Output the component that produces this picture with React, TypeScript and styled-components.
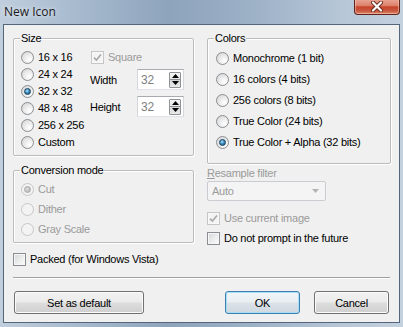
import React from "react";
import styled, { createGlobalStyle } from "styled-components";

const GlobalStyle = createGlobalStyle`
  html, body {
    margin: 0;
    padding: 0;
    background: #ffffff;
  }
  body {
    font-family: "Liberation Sans", Arial, sans-serif;
    font-size: 11px;
  }
`;

const Window = styled.div`
  width: 403px;
  height: 327px;
  box-sizing: border-box;
  display: flex;
  flex-direction: column;
  padding: 0 3px 4px 3px;
  overflow: hidden;
  background: linear-gradient(
    90deg,
    #c0cedd 0%,
    #a8bbcf 18%,
    #8ea4bc 42%,
    #9cb0c6 62%,
    #b7c7d8 85%,
    #c3d0de 100%
  );
`;

const TitleBar = styled.div`
  flex: none;
  height: 24px;
  display: flex;
  justify-content: space-between;
  align-items: flex-start;
`;

const Title = styled.div`
  padding: 4px 0 0 1px;
  font-family: "Open Sans", "Noto Sans", sans-serif;
  font-size: 12px;
  line-height: 16px;
  color: #1a1a1a;
  text-shadow: 0 0 5px rgba(255, 255, 255, 0.9);
`;

const CloseButton = styled.div`
  width: 46px;
  height: 16px;
  margin-top: -1px;
  box-sizing: border-box;
  display: flex;
  align-items: center;
  justify-content: center;
  border: 1px solid #5e2419;
  border-top: none;
  border-radius: 0 0 4px 4px;
  background: linear-gradient(
    180deg,
    #e9a898 0%,
    #dc7f69 45%,
    #c7432c 52%,
    #c95a40 80%,
    #dd8a70 100%
  );
  box-shadow: inset 0 0 0 1px rgba(255, 220, 210, 0.45);
`;

const Client = styled.div`
  flex: 1;
  display: flex;
  flex-direction: column;
  padding: 13px 9px 0 9px;
  background: #f0f0f0;
  border: 1px solid #55657a;
  color: #000000;
  letter-spacing: -0.25px;
`;

const Columns = styled.div`
  display: grid;
  grid-template-columns: 181px 184px;
  column-gap: 13px;
  height: 230px;
`;

const Column = styled.div`
  display: flex;
  flex-direction: column;
  align-items: flex-start;
`;

const Group = styled.div<{ $h: number; $padTop: number; $padLeft: number; $gap?: number }>`
  position: relative;
  align-self: stretch;
  box-sizing: border-box;
  height: ${(p) => p.$h}px;
  margin-top: ${(p) => p.$gap ?? 0}px;
  padding: ${(p) => p.$padTop}px 0 0 ${(p) => p.$padLeft}px;
  border: 1px solid #bcbcbc;
  border-radius: 2px;
  box-shadow: inset 1px 1px 0 #ffffff, 1px 1px 0 #ffffff;
`;

const Caption = styled.span<{ $disabled?: boolean }>`
  position: absolute;
  top: -7px;
  left: 6px;
  padding: 0 1px;
  line-height: 13px;
  background: #f0f0f0;
  color: ${(p) => (p.$disabled ? "#9a9a9a" : "#000000")};
`;

const SizeBody = styled.div`
  display: flex;
`;

const RadioList = styled.div<{ $w?: number }>`
  display: flex;
  flex-direction: column;
  width: ${(p) => (p.$w ? `${p.$w}px` : "auto")};
`;

const OptionRow = styled.label<{ $h: number; $disabled?: boolean; $gap?: number }>`
  display: flex;
  align-items: center;
  gap: 4px;
  height: ${(p) => p.$h}px;
  margin-top: ${(p) => p.$gap ?? 0}px;
  line-height: 13px;
  white-space: nowrap;
  color: ${(p) => (p.$disabled ? "#9a9a9a" : "#000000")};
`;

const RadioDot = styled.span<{ $checked?: boolean; $disabled?: boolean }>`
  flex: none;
  width: 13px;
  height: 13px;
  box-sizing: border-box;
  display: flex;
  align-items: center;
  justify-content: center;
  border-radius: 50%;
  border: 1px solid ${(p) => (p.$disabled ? "#c6c6c6" : "#8a8e92")};
  background: ${(p) =>
    p.$disabled
      ? "#f3f3f3"
      : "radial-gradient(circle at 68% 70%, #ffffff 0%, #eeeeee 40%, #cfcfcf 100%)"};

  &::after {
    content: "";
    display: ${(p) => (p.$checked ? "block" : "none")};
    width: 7px;
    height: 7px;
    box-sizing: border-box;
    border-radius: 50%;
    border: 1px solid ${(p) => (p.$disabled ? "#a8a8a8" : "#16405f")};
    background: ${(p) =>
      p.$disabled
        ? "radial-gradient(circle at 40% 40%, #e0e0e0 0%, #a9a9a9 100%)"
        : "radial-gradient(circle at 40% 35%, #b5e3fb 0%, #3c8fc4 45%, #1b4e74 100%)"};
  }
`;

const CheckBox = styled.span<{ $disabled?: boolean }>`
  flex: none;
  width: 13px;
  height: 13px;
  box-sizing: border-box;
  display: flex;
  align-items: center;
  justify-content: center;
  border: 1px solid ${(p) => (p.$disabled ? "#c6c6c6" : "#8a8e92")};
  background: ${(p) =>
    p.$disabled
      ? "#f4f4f4"
      : "linear-gradient(135deg, #d3d5d8 0%, #eceded 55%, #fcfcfc 100%)"};
  box-shadow: inset 0 0 0 1px ${(p) => (p.$disabled ? "#f8f8f8" : "#f6f6f6")};
`;

const SizeSide = styled.div`
  display: flex;
  flex-direction: column;
`;

const SquareRow = styled(OptionRow)`
  padding-left: 1px;
`;

const SpinRow = styled.div<{ $gap: number }>`
  display: grid;
  grid-template-columns: 47px 47px;
  align-items: center;
  height: 21px;
  margin-top: ${(p) => p.$gap}px;
`;

const SpinBox = styled.div`
  height: 21px;
  box-sizing: border-box;
  display: flex;
  align-items: center;
  justify-content: space-between;
  padding: 0 2px 0 3px;
  background: #ffffff;
  border: 1px solid;
  border-color: #a9abb0 #d5d7dc #dfe3e8 #d5d7dc;
  color: #808080;
  font-size: 12px;
`;

const SpinButtons = styled.div`
  display: flex;
  flex-direction: column;
  width: 12px;
  height: 16px;
  box-sizing: border-box;
  border: 1px solid #8f9296;
  border-radius: 1px;
  background: linear-gradient(180deg, #f6f6f6 0%, #e6e6e6 48%, #d6d6d6 52%, #e9e9e9 100%);
`;

const SpinHalf = styled.div<{ $top?: boolean }>`
  flex: 1;
  display: flex;
  align-items: center;
  justify-content: center;
  border-bottom: ${(p) => (p.$top ? "1px solid #8f9296" : "none")};
`;

const FieldLabel = styled.span<{ $gap?: number }>`
  display: block;
  margin-top: ${(p) => p.$gap ?? 0}px;
  line-height: 13px;
  color: #9a9a9a;
  white-space: nowrap;
`;

const AccessKey = styled.span`
  text-decoration: underline;
`;

const ComboBox = styled.div`
  width: 119px;
  height: 20px;
  margin-top: 1px;
  box-sizing: border-box;
  display: flex;
  align-items: center;
  justify-content: space-between;
  padding: 0 6px 0 4px;
  border: 1px solid #c9cdd1;
  border-radius: 2px;
  background: #f4f4f4;
  color: #9a9a9a;
`;

const Separator = styled.div`
  flex: none;
  margin-top: 9px;
  height: 1px;
  background: #a0a0a0;
  border-bottom: 1px solid #ffffff;
`;

const ButtonRow = styled.div`
  display: flex;
  gap: 14px;
  margin-top: 12px;
  padding: 0 1px;
`;

const PushButton = styled.button<{ $w: number; $default?: boolean }>`
  width: ${(p) => p.$w}px;
  height: 23px;
  padding: 0;
  font-family: "Liberation Sans", Arial, sans-serif;
  font-size: 11px;
  letter-spacing: -0.25px;
  color: #000000;
  border-radius: 3px;
  border: 1px solid ${(p) => (p.$default ? "#3c7fb1" : "#707070")};
  background: ${(p) =>
    p.$default
      ? "linear-gradient(180deg, #f1f5f8 0%, #e9eef2 48%, #dbe2e8 52%, #cfd8e0 100%)"
      : "linear-gradient(180deg, #f2f2f2 0%, #ebebeb 48%, #dddddd 52%, #cfcfcf 100%)"};
  box-shadow: inset 0 0 0 1px ${(p) => (p.$default ? "#a9dcf5" : "#fbfbfb")};

  &:first-child {
    margin-right: auto;
  }
`;

const Check = ({ color }: { color: string }) => (
  <svg width="9" height="9" viewBox="0 0 9 9">
    <path d="M1 4.6 L3.4 7 L8 1.4" fill="none" stroke={color} strokeWidth="1.6" />
  </svg>
);

const Radio = ({
  label,
  h,
  checked,
  disabled,
}: {
  label: string;
  h: number;
  checked?: boolean;
  disabled?: boolean;
}) => (
  <OptionRow $h={h} $disabled={disabled}>
    <RadioDot $checked={checked} $disabled={disabled} />
    {label}
  </OptionRow>
);

const Spin = ({ value }: { value: string }) => (
  <SpinBox>
    {value}
    <SpinButtons>
      <SpinHalf $top>
        <svg width="7" height="4" viewBox="0 0 7 4">
          <polygon points="0,4 7,4 3.5,0" fill="#000" />
        </svg>
      </SpinHalf>
      <SpinHalf>
        <svg width="7" height="4" viewBox="0 0 7 4">
          <polygon points="0,0 7,0 3.5,4" fill="#000" />
        </svg>
      </SpinHalf>
    </SpinButtons>
  </SpinBox>
);

const sizes = ["16 x 16", "24 x 24", "32 x 32", "48 x 48", "256 x 256", "Custom"];
const colors = [
  "Monochrome (1 bit)",
  "16 colors (4 bits)",
  "256 colors (8 bits)",
  "True Color (24 bits)",
  "True Color + Alpha (32 bits)",
];
const modes = ["Cut", "Dither", "Gray Scale"];

export default function App() {
  return (
    <>
      <GlobalStyle />
      <Window>
        <TitleBar>
          <Title>New Icon</Title>
          <CloseButton>
            <svg width="14" height="11" viewBox="0 0 14 11">
              <path d="M3 1.5 L11 9.5 M11 1.5 L3 9.5" stroke="#6a2a1e" strokeWidth="4" strokeLinecap="round" />
              <path d="M3 1.5 L11 9.5 M11 1.5 L3 9.5" stroke="#ffffff" strokeWidth="2.2" strokeLinecap="round" />
            </svg>
          </CloseButton>
        </TitleBar>

        <Client>
          <Columns>
            <Column>
              <Group $h={118} $padTop={10} $padLeft={7}>
                <Caption>Size</Caption>
                <SizeBody>
                  <RadioList $w={69}>
                    {sizes.map((s) => (
                      <Radio key={s} label={s} h={17} checked={s === "32 x 32"} />
                    ))}
                  </RadioList>
                  <SizeSide>
                    <SquareRow $h={17} $disabled>
                      <CheckBox $disabled>
                        <Check color="#a8a8a8" />
                      </CheckBox>
                      Square
                    </SquareRow>
                    <SpinRow $gap={3}>
                      <span>Width</span>
                      <Spin value="32" />
                    </SpinRow>
                    <SpinRow $gap={6}>
                      <span>Height</span>
                      <Spin value="32" />
                    </SpinRow>
                  </SizeSide>
                </SizeBody>
              </Group>

              <Group $h={73} $padTop={8} $padLeft={7} $gap={14}>
                <Caption>Conversion mode</Caption>
                <RadioList>
                  {modes.map((m) => (
                    <Radio key={m} label={m} h={20} checked={m === "Cut"} disabled />
                  ))}
                </RadioList>
              </Group>

              <OptionRow $h={17} $gap={8}>
                <CheckBox />
                Packed (for Windows Vista)
              </OptionRow>
            </Column>

            <Column>
              <Group $h={126} $padTop={9} $padLeft={8}>
                <Caption>Colors</Caption>
                <RadioList>
                  {colors.map((c) => (
                    <Radio key={c} label={c} h={21} checked={c.startsWith("True Color +")} />
                  ))}
                </RadioList>
              </Group>

              <FieldLabel $gap={3}>
                <AccessKey>R</AccessKey>esample filter
              </FieldLabel>
              <ComboBox>
                Auto
                <svg width="7" height="4" viewBox="0 0 7 4">
                  <polygon points="0,0 7,0 3.5,4" fill="#b4b4b4" />
                </svg>
              </ComboBox>

              <OptionRow $h={17} $gap={9} $disabled>
                <CheckBox $disabled>
                  <Check color="#a8a8a8" />
                </CheckBox>
                Use current image
              </OptionRow>
              <OptionRow $h={17} $gap={3}>
                <CheckBox />
                Do not prompt in the future
              </OptionRow>
            </Column>
          </Columns>

          <Separator />

          <ButtonRow>
            <PushButton $w={130}>Set as default</PushButton>
            <PushButton $w={75} $default>
              OK
            </PushButton>
            <PushButton $w={75}>Cancel</PushButton>
          </ButtonRow>
        </Client>
      </Window>
    </>
  );
}
